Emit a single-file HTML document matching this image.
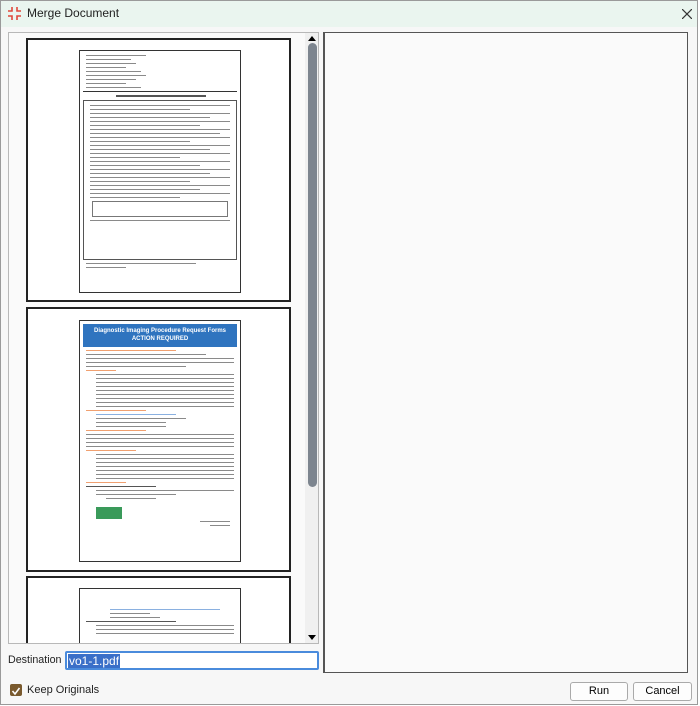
<!DOCTYPE html>
<html><head><meta charset="utf-8"><style>
*{box-sizing:border-box;margin:0;padding:0}
body{width:700px;height:706px;background:#fff;font-family:"Liberation Sans",sans-serif;position:relative;overflow:hidden}
.win{position:absolute;left:0;top:0;width:698px;height:705px;border:1px solid #9a9a9a;background:#f7f7f7}
.title{position:absolute;left:0;top:0;width:696px;height:26px;background:#eaf5ef}
.title span{position:absolute;left:26px;top:5px;font-size:12px;color:#222}
.list{position:absolute;left:7px;top:31px;width:311px;height:612px;border:1px solid #b8b8b8;background:#fafafa;overflow:hidden}
.sb{position:absolute;left:296px;top:0;width:14px;height:610px;background:#f0f0f0}
.thumb{position:absolute;left:3px;top:10px;width:9px;height:444px;background:#7d858f;border-radius:5px}
.page{position:absolute;left:17px;width:265px;border:2px solid #222;background:#fff}
.doc{position:absolute;left:51px;width:162px;border:1px solid #333;background:#fff;overflow:hidden}
.ln{height:1px;background:#8a8a8a;margin:2px 6px 3px}
.right{position:absolute;left:322px;top:31px;width:365px;height:641px;border:1px solid #555;border-left-width:2px;background:#fafafa}
</style></head><body>
<div class="win">
<div class="title">
<svg style="position:absolute;left:7px;top:6px" width="13" height="13" viewBox="0 0 13 13"><path d="M4 0v4H0M9 0v4h4M4 13V9H0M9 13V9h4" stroke="#e0483a" stroke-width="1.6" fill="none"/></svg>
<span>Merge Document</span>
<svg style="position:absolute;left:681px;top:8px" width="10" height="10" viewBox="0 0 10 10"><path d="M0 0L10 10M10 0L0 10" stroke="#333" stroke-width="1.2"/></svg>
</div>
<div class="list">
<div class="page" style="top:5px;height:264px">
<div class="doc" style="top:10px;height:243px">
<div style="height:2px"></div>
<div class="ln" style="width:60px"></div><div class="ln" style="width:45px"></div><div class="ln" style="width:50px"></div><div class="ln" style="width:40px"></div><div class="ln" style="width:55px"></div><div class="ln" style="width:60px"></div><div class="ln" style="width:50px"></div><div class="ln" style="width:40px"></div><div class="ln" style="width:55px"></div>
<div style="height:1px;background:#333;margin:3px 3px"></div>
<div class="ln" style="width:90px;margin-left:36px;background:#555;height:2px"></div>
<div style="margin:3px 3px;border:1px solid #555;height:160px;padding-top:2px">
<div class="ln"></div><div class="ln" style="width:100px"></div><div class="ln"></div><div class="ln" style="width:120px"></div><div class="ln"></div><div class="ln" style="width:110px"></div><div class="ln"></div><div class="ln" style="width:130px"></div><div class="ln"></div><div class="ln" style="width:100px"></div><div class="ln"></div><div class="ln" style="width:120px"></div><div class="ln"></div><div class="ln" style="width:90px"></div><div class="ln"></div><div class="ln" style="width:110px"></div><div class="ln"></div><div class="ln" style="width:120px"></div><div class="ln"></div><div class="ln" style="width:100px"></div><div class="ln"></div><div class="ln" style="width:110px"></div><div class="ln"></div><div class="ln" style="width:90px"></div>
<div style="margin:3px 8px;border:1px solid #777;height:16px"></div>
<div class="ln"></div>
</div>
<div class="ln" style="width:110px"></div><div class="ln" style="width:40px"></div>
</div>
</div>
<div class="page" style="top:274px;height:265px">
<div class="doc" style="top:11px;height:242px">
<div style="margin:3px;height:23px;background:#2f74bf;color:#fff;font-size:6px;font-weight:bold;text-align:center;line-height:8px;padding-top:3px">Diagnostic Imaging Procedure Request Forms<br>ACTION REQUIRED</div>
<div class="ln" style="width:90px;background:#f0a070"></div>
<div class="ln" style="width:120px"></div><div class="ln"></div><div class="ln"></div><div class="ln" style="width:100px"></div>
<div class="ln" style="width:30px;background:#f0a070"></div>
<div class="ln" style="margin-left:16px"></div><div class="ln" style="margin-left:16px"></div><div class="ln" style="margin-left:16px"></div><div class="ln" style="margin-left:16px"></div><div class="ln" style="margin-left:16px"></div><div class="ln" style="margin-left:16px"></div><div class="ln" style="margin-left:16px"></div><div class="ln" style="margin-left:16px"></div><div class="ln" style="margin-left:16px"></div>
<div class="ln" style="width:60px;background:#f0a070"></div>
<div class="ln" style="margin-left:16px;width:80px;background:#8ab0e0"></div><div class="ln" style="margin-left:16px;width:90px"></div><div class="ln" style="margin-left:16px;width:70px"></div><div class="ln" style="margin-left:16px;width:70px"></div>
<div class="ln" style="width:60px;background:#f0a070"></div>
<div class="ln"></div><div class="ln"></div><div class="ln"></div><div class="ln"></div>
<div class="ln" style="width:50px;background:#f0a070"></div>
<div class="ln" style="margin-left:16px"></div><div class="ln" style="margin-left:16px"></div><div class="ln" style="margin-left:16px"></div><div class="ln" style="margin-left:16px"></div><div class="ln" style="margin-left:16px"></div><div class="ln" style="margin-left:16px"></div><div class="ln" style="margin-left:16px"></div>
<div class="ln" style="width:40px;background:#f0a070"></div>
<div class="ln" style="width:70px;background:#555"></div><div class="ln" style="margin-left:16px"></div><div class="ln" style="margin-left:16px;width:80px"></div><div class="ln" style="margin-left:26px;width:50px"></div>
<div style="margin:8px 16px 0;width:26px;height:12px;background:#3a9a5a"></div>
<div class="ln" style="margin-left:120px;width:30px"></div><div class="ln" style="margin-left:130px;width:20px"></div>
</div>
</div>
<div class="page" style="top:543px;height:80px">
<div class="doc" style="top:10px;height:80px">
<div style="height:18px"></div>
<div class="ln" style="margin-left:30px;width:110px;background:#8ab0e0"></div>
<div class="ln" style="margin-left:30px;width:40px"></div><div class="ln" style="margin-left:30px;width:50px"></div>
<div class="ln" style="width:90px;background:#555"></div>
<div class="ln" style="margin-left:16px"></div><div class="ln" style="margin-left:16px"></div><div class="ln" style="margin-left:16px"></div>
</div>
</div>
<div class="sb"><div style="position:absolute;left:3px;top:3px;border:4px solid transparent;border-bottom:5px solid #000;border-top:0"></div><div class="thumb"></div><div style="position:absolute;left:3px;top:602px;border:4px solid transparent;border-top:5px solid #000;border-bottom:0"></div></div>
</div>
<div class="right"></div>
<div style="position:absolute;left:7px;top:653px;font-size:10.7px;color:#222">Destination</div>
<div style="position:absolute;left:64px;top:650px;width:254px;height:19px;border:2px solid #4a8bdc;border-radius:2px;background:#fff"><span style="position:absolute;left:1px;top:1px;background:#3a6fc8;color:#fff;font-size:12px;line-height:14px;padding:0 1px">vo1-1.pdf</span></div>
<div style="position:absolute;left:9px;top:683px;width:12px;height:12px;background:#7a5a2e;border-radius:2px"><svg width="12" height="12" viewBox="0 0 12 12"><path d="M2.5 6l2.5 3 4.5-6" stroke="#fff" stroke-width="1.6" fill="none"/></svg></div>
<div style="position:absolute;left:26px;top:683px;font-size:11px;color:#222">Keep Originals</div>
<div style="position:absolute;left:569px;top:681px;width:58px;height:19px;border:1px solid #aaa;border-radius:3px;background:#fdfdfd;font-size:11px;text-align:center;line-height:17px">Run</div>
<div style="position:absolute;left:632px;top:681px;width:59px;height:19px;border:1px solid #aaa;border-radius:3px;background:#fdfdfd;font-size:11px;text-align:center;line-height:17px">Cancel</div>
</div>
</body></html>
